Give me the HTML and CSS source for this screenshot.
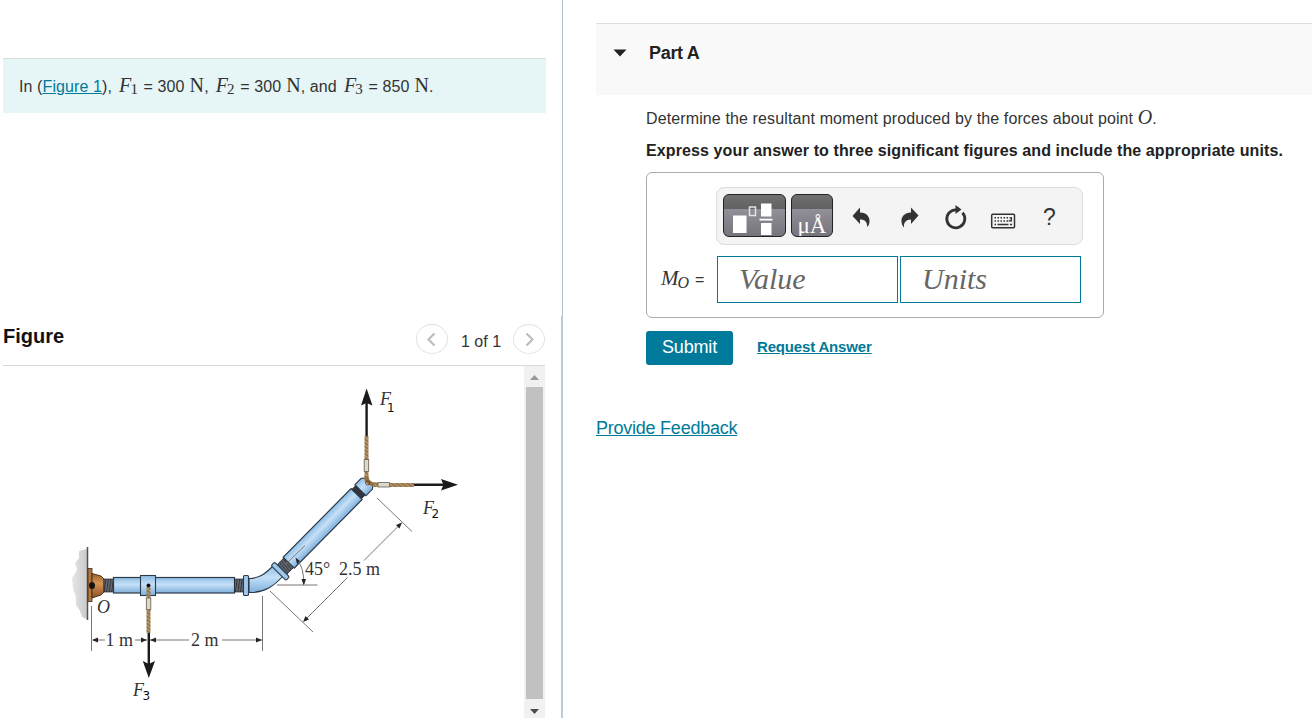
FILE: index.html
```html
<!DOCTYPE html>
<html lang="en">
<head>
<meta charset="utf-8">
<title>Resultant moment</title>
<link rel="stylesheet" href="styles.css">
</head>
<body>
<main class="page">
  <section class="left">
    <div class="prompt"><span class="prompt-text">In (<a href="#">Figure 1</a>), <span class="math f">F<sub>1</sub></span> = 300 <span class="math n">N</span>, <span class="math f">F<sub>2</sub></span> = 300 <span class="math n">N</span>, and <span class="math f">F<sub>3</sub></span> = 850 <span class="math n">N</span>.</span></div>
    <div class="figure-head">
      <h2>Figure</h2>
      <div class="pager">
        <span class="round"><svg width="32" height="32" viewBox="0 0 32 32"><path d="M18.500 9.500 12.500 15.500 18.500 21.500"/></svg></span>
        <span class="count">1 of 1</span>
        <span class="round"><svg width="32" height="32" viewBox="0 0 32 32"><path d="M13.500 9.500 19.500 15.500 13.500 21.500"/></svg></span>
      </div>
    </div>
    <div class="figure-body">
      <svg class="diagram" width="521" height="352" viewBox="3 366 521 352">
        <defs>
          <linearGradient id="pipe" x1="0" y1="0" x2="0" y2="1"><stop offset="0" stop-color="#8fbde4"/><stop offset=".45" stop-color="#c5e0f8"/><stop offset="1" stop-color="#7fb0dc"/></linearGradient>
          <linearGradient id="brass" x1="0" y1="0" x2="0" y2="1"><stop offset="0" stop-color="#9a6232"/><stop offset=".4" stop-color="#d79350"/><stop offset="1" stop-color="#875125"/></linearGradient>
          <linearGradient id="wall"><stop offset="0" stop-color="#e6e6e6"/><stop offset="1" stop-color="#cacaca"/></linearGradient>
          <pattern id="thread" width="2.500" height="5" patternUnits="userSpaceOnUse" patternTransform="rotate(8)"><rect width="3" height="5" fill="#666970"/><rect width="1" height="5" fill="#34363b"/></pattern>
          <pattern id="rope" width="3" height="3" patternUnits="userSpaceOnUse" patternTransform="rotate(35)"><rect width="3" height="3" fill="#b09468"/><rect width="3" height="1" fill="#80643c"/></pattern>
        </defs>
        <!-- wall and flange -->
        <path d="M87 549 79 551 79 558 75 563 77 570 72 578 73 589 76 597 76 605 80 611 82 617 87 619Z" fill="url(#wall)"/>
        <path d="M87.500 547V620" stroke="#55514e" stroke-width="1.500"/>
        <rect x="88" y="568.500" width="4" height="33" fill="#b4783f" stroke="#3e2a18" stroke-width=".8"/>
        <path d="M92 573.500 101 576 104 579V592L101 595 92 598Z" fill="url(#brass)" stroke="#3e2a18" stroke-width=".9"/>
        <ellipse cx="92" cy="585.500" rx="3" ry="3.500" fill="#181310"/>
        <!-- horizontal run -->
        <rect x="104" y="579" width="9.500" height="13" fill="url(#thread)" stroke="#25272b" stroke-width=".7"/>
        <rect x="113.500" y="577.500" width="121" height="15.500" fill="url(#pipe)" stroke="#2c3a4a" stroke-width="1.200"/>
        <rect x="140.500" y="575.500" width="15" height="20" fill="url(#pipe)" stroke="#2c3a4a" stroke-width="1.100"/>
        <rect x="234.500" y="579" width="9.500" height="13" fill="url(#thread)" stroke="#25272b" stroke-width=".7"/>
        <!-- elbow -->
        <path d="M249 578.500C260 578.500 266 573 274 565L284 575C274 586 265 593 249 592.500Z" fill="url(#pipe)" stroke="#2c3a4a" stroke-width="1.100"/>
        <rect x="243.500" y="575.500" width="5" height="20" rx="1" fill="#9cc8ee" stroke="#2c3a4a" stroke-width="1.100"/>
        <!-- inclined run -->
        <g transform="translate(288.700 562.700) rotate(-45.300)">
          <rect x="-10" y="-6.800" width="10" height="13.600" fill="url(#thread)" stroke="#25272b" stroke-width=".8"/>
          <rect x="-14.500" y="-10.500" width="5" height="21" rx="1.500" fill="#9cc8ee" stroke="#2c3a4a" stroke-width="1.100"/>
          <rect x="97" y="-6.500" width="5" height="13" fill="#34363b" stroke="#25272b"/>
          <rect x="0" y="-7.800" width="96.500" height="15.600" fill="url(#pipe)" stroke="#2c3a4a" stroke-width="1.200"/>
          <path d="M102-7.800H111L115-4V5L111 7.800H102Z" fill="url(#pipe)" stroke="#2c3a4a" stroke-width="1.100"/>
        </g>
        <!-- ropes -->
        <rect x="364.500" y="436" width="4" height="46" fill="url(#rope)"/>
        <rect x="364.200" y="459.500" width="4.500" height="12" fill="#ded9ce" stroke="#68604e" stroke-width=".8"/>
        <path d="M366.500 476Q366 485 378 484.500" fill="none" stroke="#957044" stroke-width="4"/>
        <circle cx="367.500" cy="483" r="2" fill="none" stroke="#4b371d" stroke-width=".8"/>
        <rect x="374" y="483" width="40" height="4" fill="url(#rope)"/>
        <rect x="378" y="482.500" width="11.500" height="4.500" fill="#ded9ce" stroke="#68604e" stroke-width=".8"/>
        <circle cx="148.500" cy="585.500" r="2" fill="#111"/>
        <rect x="146.500" y="587" width="4" height="46" fill="url(#rope)"/>
        <rect x="146.300" y="598" width="4.500" height="11.500" fill="#ded9ce" stroke="#68604e" stroke-width=".8"/>
        <!-- force arrows -->
        <g stroke="#1c1a1b" stroke-width="2.400"><path d="M366.600 400V436M414 484.700H444M148.800 633V665"/></g>
        <g fill="#1c1a1b"><path d="M366.600 388.500 372.500 405.500 366.600 403 361 405.500ZM458 484.700 441 490.500 443.500 484.700 441 479ZM148.800 678 142.800 661 148.800 664 155 661Z"/></g>
        <!-- dimensions -->
        <g fill="none" stroke="#777" stroke-width="1">
          <path d="M91.500 606V651M262.500 596V651M93 640H105M135 640H147M150 640H189M222 640H262M270 591 313 632M377 498 412 531.500M304 621 347.500 577.500M364 560.500 401 523.500M277 585H317.500M285 565 305 545.500"/>
          <path d="M297 560Q304 567 303.800 584"/>
        </g>
        <g fill="#242424"><path d="M92 640 98 637.500V642.500ZM147 640 141 637.500V642.500ZM150 640 156 637.500V642.500ZM262 640 256 637.500V642.500ZM303 622 305.500 616 309 619.500ZM402 522.500 399.500 528.500 396 525ZM303.800 585.500 301.500 579H306ZM295.500 557.500 300 561 297 564Z"/></g>
        <!-- labels -->
        <g class="labels">
          <text x="105.500" y="646">1 m</text>
          <text x="191" y="646">2 m</text>
          <text x="305" y="574.500">45°</text>
          <text x="339" y="574.500">2.5 m</text>
          <text class="it" x="97" y="612.500">O</text>
          <text class="it" x="380" y="405">F</text><text class="sub" x="387" y="412">1</text>
          <text class="it" x="423" y="514">F</text><text class="sub" x="431.500" y="518">2</text>
          <text class="it" x="133" y="695.500">F</text><text class="sub" x="142.500" y="699.500">3</text>
        </g>
      </svg>
      <div class="scrollbar">
        <svg width="21" height="21" viewBox="0 0 21 21"><path d="M6 14H15L10.500 9Z" fill="#989898"/></svg>
        <div class="thumb"></div>
        <svg width="21" height="19" viewBox="0 0 21 19"><path d="M6 10H15L10.500 15Z" fill="#4d4d4d"/></svg>
      </div>
    </div>
  </section>
  <div class="divider"><i></i><b></b></div>
  <section class="right">
    <header class="part"><svg width="14" height="8" viewBox="0 0 14 8"><path d="M.5.5H13.500L7 7.500Z" fill="#222"/></svg><h1>Part A</h1></header>
    <div class="question">
      <p class="ask">Determine the resultant moment produced by the forces about point <span class="math o">O</span>.</p>
      <p class="instructions">Express your answer to three significant figures and include the appropriate units.</p>
      <div class="answer">
        <div class="toolbar">
          <button class="dark templates" aria-label="Templates"><svg width="61" height="41" viewBox="0 0 61 41"><g fill="#fff"><path d="M9 20.500H22.500V38H9ZM37 8.500H47.500V21.500H37ZM35.500 23.800H48.500V25.500H35.500ZM37 28H47.500V40H37Z"/></g><rect x="25.500" y="12" width="6" height="8.500" fill="none" stroke="#e4e4e4" stroke-width="1.500"/></svg></button>
          <button class="dark symbols">μÅ</button>
          <svg class="tool" width="34" height="40" viewBox="0 0 34 40"><path d="M8.500 17 16 8.500V13.500C23 13.500 26 18.500 25.500 23 25.300 25.300 24.500 27 23 28 23.500 23 21 20.500 16 20.500V25Z"/></svg>
          <svg class="tool redo" width="34" height="40" viewBox="0 0 34 40"><path d="M25.500 16.500 18 8.500V13.500C11.500 13.500 8 18 8.500 22.500 8.700 25 9.500 27 11 28.500 10.500 23.500 13 20.500 18 20.500V25Z"/></svg>
          <svg class="tool reset" width="34" height="40" viewBox="0 0 34 40"><path d="M23.500 14.800A9 9 0 1 1 17 11.800" fill="none" stroke="#333" stroke-width="2.800"/><path d="M16.500 7 22.500 11.500 16.500 16Z"/></svg>
          <svg class="tool keys" width="34" height="40" viewBox="0 0 34 40"><rect x="5.700" y="15.200" width="22.800" height="13.500" rx="1" fill="none" stroke="#333" stroke-width="1.500"/><path d="M8.500 18.700H24.500M8.500 21.900H22M8.500 25.500H10" fill="none" stroke="#333" stroke-width="1.500" stroke-dasharray="1.500 1.500"/><path d="M11.500 24.800H22.500V26.300H11.500ZM24.500 18H26V22.600H22.500V21.200H24.500ZM24 24.800H26V26.300H24Z"/></svg>
          <span class="help">?</span>
        </div>
        <div class="inputs"><label><span class="mo">M<sub>O</sub></span><span class="eq">=</span></label><div class="field">Value</div><div class="field">Units</div></div>
      </div>
      <div class="actions"><button class="submit">Submit</button><a href="#">Request Answer</a></div>
    </div>
    <a class="feedback" href="#">Provide Feedback</a>
  </section>
</main>
</body>
</html>
```
FILE: styles.css
```css
* { box-sizing: border-box; }
body { margin: 0; background: #fff; color: #333; font: 16px/20px "Liberation Sans", Arial, sans-serif; overflow: hidden; }
h1, h2, p { margin: 0; }
a { color: #007a99; text-decoration: underline; }
button { border: 0; margin: 0; padding: 0; }
svg { display: block; flex: none; }
.page { display: flex; width: 1312px; height: 718px; }
.left { width: 543px; margin-left: 3px; padding-top: 58px; flex: none; }
.prompt { height: 55px; padding: 16px 0 0 16px; background: #e6f5f6; border-top: 1px solid #d8dddd; white-space: nowrap; letter-spacing: .1px; }
.math { font-family: "Liberation Serif", serif; font-size: 20px; line-height: 1; }
.f { font-style: italic; margin: 0 1px 0 2.500px; }
.f sub { font-style: normal; font-size: 15px; line-height: 0; vertical-align: -2px; margin-left: -1px; }
.n { margin-left: .5px; }
.figure-head { display: flex; justify-content: space-between; width: 542px; height: 253px; padding-top: 210px; border-bottom: 1px solid #d8d8d8; }
h2 { font-size: 20px; line-height: 26px; color: #111; }
.pager { display: flex; align-items: flex-start; gap: 13px; padding-top: 1px; }
.round { width: 32px; height: 30px; border: 1px solid #e2e2e2; border-radius: 50%; }
.round svg { margin: -1px; }
.round path { fill: none; stroke: #bdbdbd; stroke-width: 2.200; }
.count { width: 39px; padding-top: 8px; white-space: nowrap; }
.figure-body { display: flex; width: 542px; height: 352px; }
.scrollbar { width: 21px; background: #f1f1f1; flex: none; }
.thumb { height: 312px; margin: 0 2px; background: #c1c1c1; }
.labels { font: 18px "Liberation Serif", serif; fill: #333; }
.it { font-style: italic; }
.sub { font: 12px "DejaVu Sans", sans-serif; fill: #111; }
.divider { width: 3px; margin-left: 15px; flex: none; }
.divider i { display: block; width: 1px; height: 316px; margin-left: 1px; background: #aebfd0; }
.divider b { display: block; width: 2px; height: 402px; background: #b7cbdf; }
.right { flex: 1; padding: 23px 0 0 32px; }
.part { display: flex; align-items: flex-start; height: 72px; padding: 25px 0 0 17px; background: #f9f9f9; border-top: 1px solid #ddd; }
h1 { margin: -7px 0 0 22px; font-size: 18px; line-height: 22px; letter-spacing: -.3px; color: #222; }
.question { padding-left: 50px; }
.ask { height: 46px; padding-top: 12px; white-space: nowrap; letter-spacing: .12px; }
.o { font-style: italic; }
.instructions { height: 31px; font-weight: 700; color: #222; white-space: nowrap; letter-spacing: .112px; }
.answer { width: 458px; height: 146px; padding: 14px 0 0 14px; border: 1px solid #aaa; border-radius: 6px; }
.toolbar { display: flex; align-items: flex-start; width: 367px; height: 58px; margin-left: 55px; padding: 6px; background: #f4f4f4; border: 1px solid #ddd; border-radius: 8px; }
.dark { height: 43px; border: 1px solid #222; border-radius: 6px; background: linear-gradient(#707070 0, #616161 14px, #918f98 14px, #77757b 100%); color: #fff; overflow: hidden; flex: none; }
.templates { width: 63px; }
.symbols { width: 42px; margin-left: 5px; padding-top: 17px; font: 23px/28px "Liberation Serif", serif; }
.tool { margin: 5px 0 0 11px; fill: #333; }
.redo { margin-left: 15px; }
.reset { margin: 4px 0 0 12px; }
.keys { margin-left: 13px; }
.help { padding: 10px 0 0 23px; font-size: 23px; line-height: 26px; }
.inputs { display: flex; gap: 2px; margin-top: 11px; }
label { display: flex; width: 54px; align-items: baseline; line-height: 46px; }
.mo { font: italic 21px/44px "Liberation Serif", serif; }
.mo sub { font-size: 16px; line-height: 0; vertical-align: -3px; margin-left: -1px; }
.eq { margin-left: 6px; }
.field { width: 181px; height: 47px; padding-left: 21px; border: 1px solid #007a99; color: #666; font: italic 30px/44px "Liberation Serif", serif; }
.actions { display: flex; align-items: flex-start; margin-top: 13px; }
.submit { width: 87px; height: 34px; padding-bottom: 2px; border-radius: 3px; background: #007a9b; color: #fff; font: 18px/30px "Liberation Sans", sans-serif; letter-spacing: -.15px; }
.actions a { margin: 6px 0 0 24px; font-size: 15px; font-weight: 700; letter-spacing: -.17px; white-space: nowrap; }
.feedback { display: inline-block; margin-top: 53px; font-size: 18px; letter-spacing: -.24px; }
```
